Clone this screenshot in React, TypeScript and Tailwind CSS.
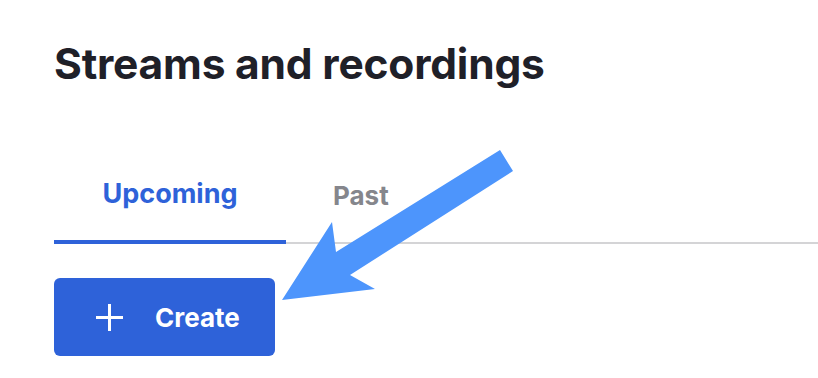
import React from "react";

const font = { fontFamily: "Inter, 'Noto Sans', sans-serif" };

// Arrow drawn over the page, pointing at the Create button
const Arrow = () => (
  <svg
    className="pointer-events-none absolute left-0 top-0"
    width="818"
    height="378"
    viewBox="0 0 818 378"
  >
    <polygon
      points="500,150 336,252 332,222 282,300 375,289 350,275 513,171"
      fill="#4d95fc"
    />
  </svg>
);

const App = () => {
  return (
    <div
      className="relative h-[378px] w-[818px] overflow-hidden bg-white"
      style={font}
    >
      <div className="flex flex-col pl-[54px] pt-[36px]">
        <h1 className="text-[42.5px] font-bold leading-[56px] tracking-[-0.2px] text-[#1f2028]">
          Streams and recordings
        </h1>

        <div className="relative mt-[84px] flex">
          <div className="absolute bottom-0 left-0 right-0 h-[2px] bg-[#d4d4d6]" />
          <button className="relative w-[232px] border-b-4 border-[#2e62d9] pt-[3px] pb-[31px] text-[27px] font-bold leading-[30px] text-[#2e62d9]">
            Upcoming
          </button>
          <button className="relative ml-[47px] pt-[3px] pb-[31px] text-[26px] font-bold leading-[30px] text-[#85868c]">
            Past
          </button>
        </div>

        <button className="mt-[34px] flex h-[78px] w-[221px] items-center rounded-md bg-[#2e62d9] pl-[42px] text-white">
          <svg width="27" height="27" viewBox="0 0 27 27">
            <path d="M13.5 0v27M0 13.5h27" stroke="white" strokeWidth="3" />
          </svg>
          <span className="ml-[32px] text-[26px] font-bold">Create</span>
        </button>
      </div>
      <Arrow />
    </div>
  );
};

export default App;
